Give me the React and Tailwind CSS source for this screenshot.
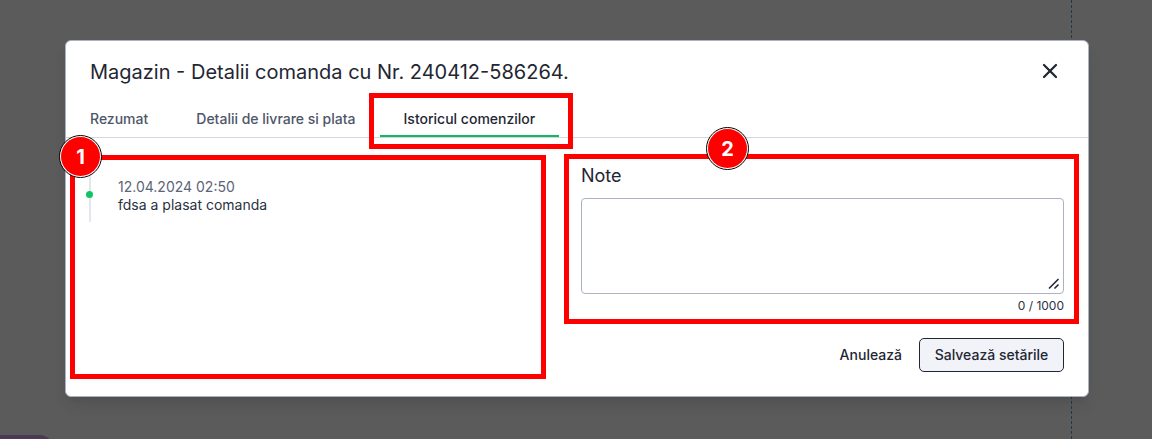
import React from 'react';
import { X } from 'lucide-react';

const tabs = ['Rezumat', 'Detalii de livrare si plata', 'Istoricul comenzilor'];

const Badge = ({ n, className }) => (
  <div className={`absolute flex h-[43px] w-[43px] items-center justify-center rounded-full border border-black bg-white ${className}`}>
    <div className="flex h-[39px] w-[39px] items-center justify-center rounded-full bg-[#ff0000] text-[20px] font-bold text-white">
      {n}
    </div>
  </div>
);

const App = () => {
  return (
    <div className="relative flex h-[439px] w-full justify-center overflow-hidden bg-[#5b5b5b] pt-10 font-['Inter',sans-serif]">
      {/* stuff behind the overlay */}
      <div className="absolute inset-y-0 left-[1071px] border-l border-dashed border-[#1c3b4d]" />
      <div className="absolute left-0 top-[435px] h-8 w-[55px] rounded-tr-2xl bg-[#4a3a55]" />

      {/* Modal */}
      <div className="relative ml-0.5 flex h-[357px] w-[1024px] flex-col rounded-md border border-[#aab2c4] bg-white shadow-lg">
        <div className="flex items-start justify-between px-6 pt-[17px]">
          <h2 className="text-xl leading-7 text-[#1f2733]">Magazin - Detalii comanda cu Nr. 240412-586264.</h2>
          <button className="mr-[2px] mt-[1px] text-[#1f2733]">
            <X size={24} strokeWidth={2.25} />
          </button>
        </div>

        {/* Tabs */}
        <div className="mt-3 flex border-b border-[#d3d6e0] px-6">
          {tabs.map((tab, i) => (
            <div
              key={tab}
              className={`flex h-[39px] items-center border-b-2 pt-1 text-sm font-medium ${i === 0 ? 'pr-6' : 'px-6'} ${
                i === 2 ? 'border-[#10b95f] text-[#1f2733]' : 'border-transparent text-[#4d5669]'
              }`}
            >
              {tab}
            </div>
          ))}
        </div>

        {/* Body */}
        <div className="grid grid-cols-2 gap-2 px-6">
          <div className="flex pt-[30px]">
            <div className="relative -ml-px h-[54px] w-0.5 bg-[#e2e6ee]">
              <div className="absolute left-[-3px] top-[23px] h-[7px] w-[7px] rounded-full bg-[#0ec566]" />
            </div>
            <div className="ml-[27px] pt-[10px] text-sm leading-[18px]">
              <div className="text-[#5c6477]">12.04.2024 02:50</div>
              <div className="text-[#2a3240]">fdsa a plasat comanda</div>
            </div>
          </div>

          <div className="pt-[25px]">
            <label className="block text-[18px] leading-[26px] text-[#1f2733]">Note</label>
            <div className="relative mt-[9px]">
              <textarea className="block h-[96px] w-full resize-none rounded border border-[#aab2c4] bg-white" />
              <svg className="absolute bottom-[4px] right-[4px]" width="12" height="12" viewBox="0 0 12 12" fill="none" stroke="#1f2733" strokeWidth="1.6">
                <path d="M1 10.5 10.5 1" />
                <path d="M6.5 10.5 10.5 6.5" />
              </svg>
            </div>
            <div className="mt-1 text-right text-xs leading-4 text-[#2a3240]">0 / 1000</div>
          </div>
        </div>

        {/* Footer */}
        <div className="mt-6 flex items-center justify-end gap-[17px] px-6">
          <button className="text-sm font-medium text-[#1f2733]">Anulează</button>
          <button className="h-[34px] w-[145px] rounded-[5px] border border-[#1f2733] bg-[#f1f3f8] text-sm font-medium text-[#1f2733]">
            Salvează setările
          </button>
        </div>
      </div>

      {/* Annotations on top of the screenshot */}
      <div className="absolute left-[369px] top-[93px] h-[56px] w-[204px] border-[5px] border-[#ff0000]" />
      <div className="absolute left-[70px] top-[155px] h-[224px] w-[476px] border-[5px] border-[#ff0000]" />
      <div className="absolute left-[564px] top-[154px] h-[170px] w-[515px] border-[5px] border-[#ff0000]" />
      <Badge n="1" className="left-[59px] top-[135px]" />
      <Badge n="2" className="left-[706px] top-[127px]" />
    </div>
  );
};

export default App;
